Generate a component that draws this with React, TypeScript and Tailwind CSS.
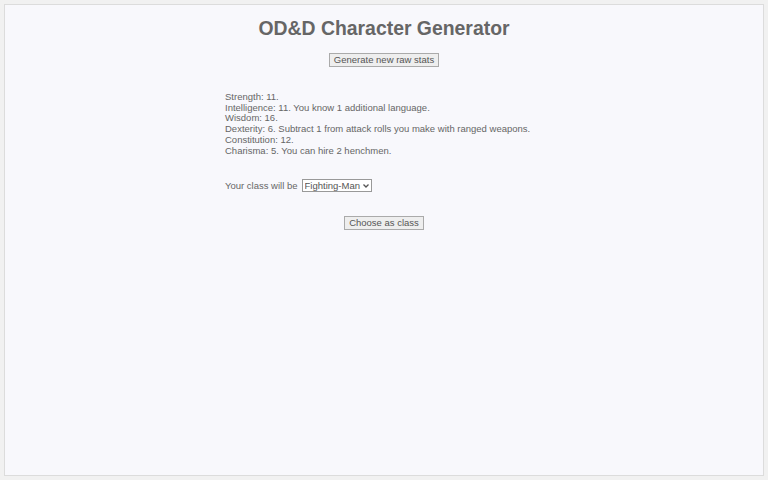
import { useState } from "react";

const stats = [
  "Strength: 11.",
  "Intelligence: 11. You know 1 additional language.",
  "Wisdom: 16.",
  "Dexterity: 6. Subtract 1 from attack rolls you make with ranged weapons.",
  "Constitution: 12.",
  "Charisma: 5. You can hire 2 henchmen.",
];

export default function App() {
  const [cls, setCls] = useState("Fighting-Man");

  return (
    <div className="h-[480px] bg-[#f1f1f1] p-[4px] font-['Liberation_Sans',Arial,sans-serif] text-[#666]">
      <div className="h-full border border-[#dcdcdc] bg-[#f8f8fc]">
        <h1 className="pt-[11px] text-center text-[19.4px] font-bold leading-[24px] text-[#666]">
          OD&amp;D Character Generator
        </h1>
        <div className="mt-[13px] flex justify-center">
          <button className="h-[14px] border border-[#aaa] bg-[#eee] px-[4px] text-[9.5px] leading-[12px] text-[#555]">
            Generate new raw stats
          </button>
        </div>

        <div className="mx-auto mt-[25px] w-[318px] text-[9.5px] leading-[10.7px]">
          {stats.map((s) => (
            <div key={s} className="whitespace-nowrap">
              {s}
            </div>
          ))}

          <div className="mt-[24px] flex items-center gap-[4px]">
            <span>Your class will be</span>
            <div className="relative -top-[1px]">
              <select
                value={cls}
                onChange={(e) => setCls(e.target.value)}
                className="h-[13px] w-[70px] appearance-none border border-[#999] bg-white pl-[2px] text-[9.5px] leading-[11px] text-[#555]"
              >
                <option>Fighting-Man</option>
                <option>Magic-User</option>
                <option>Cleric</option>
              </select>
              {/* small chevron on the right of the select */}
              <svg
                className="pointer-events-none absolute right-[3px] top-[5px] h-[4px] w-[6px]"
                viewBox="0 0 6 4"
                fill="none"
                stroke="#555"
                strokeWidth="1.3"
              >
                <path d="M0.5 0.5L3 3L5.5 0.5" />
              </svg>
            </div>
          </div>
        </div>

        <div className="mt-[23px] flex justify-center">
          <button className="h-[14px] border border-[#aaa] bg-[#eee] px-[4px] text-[9.5px] leading-[12px] text-[#555]">
            Choose as class
          </button>
        </div>
      </div>
    </div>
  );
}
